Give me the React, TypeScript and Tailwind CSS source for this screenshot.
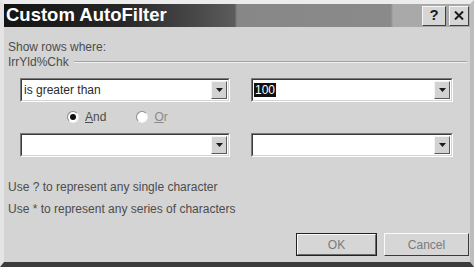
import React from "react";

function Arrow() {
    return (
        <svg width="7" height="4" viewBox="0 0 7 4">
            <path d="M0 0h7L3.5 4z" fill="#1a1a1a" />
        </svg>
    );
}

function Combo({ width, children }: { width: string; children?: React.ReactNode }) {
    return (
        <div className={`${width} h-[24px] border border-t-[#7a7a7a] border-l-[#7a7a7a] border-b-white border-r-white`}>
            <div className="h-full flex items-stretch bg-white border border-t-[#3a3a3a] border-l-[#3a3a3a] border-b-[#d4d4d4] border-r-[#d4d4d4]">
                <div className="flex-1 flex items-center pl-[2px] text-[12px] text-[#2a2a2a]">{children}</div>
                <div className="w-[16px] m-[1px] bg-[#d2d2d2] border border-t-[#f4f4f4] border-l-[#f4f4f4] border-b-[#5a5a5a] border-r-[#5a5a5a] flex items-center justify-center">
                    <Arrow />
                </div>
            </div>
        </div>
    );
}

function Radio({ checked }: { checked?: boolean }) {
    return (
        <div className="w-[12px] h-[12px] rounded-full bg-white border border-t-[#8a8a8a] border-l-[#8a8a8a] border-b-[#eeeeee] border-r-[#eeeeee] flex items-center justify-center">
            {checked && <div className="w-[6px] h-[6px] rounded-full bg-[#111]" />}
        </div>
    );
}

export default function App() {
    return (
        <div
            className="w-[474px] h-[267px] flex flex-col bg-[#d4d4d4] border-t-4 border-l-4 border-r-4 border-b-[5px] border-t-[#ececec] border-l-[#e4e4e4] border-r-[#bdbdbd] border-b-[#3c3c3c]"
            style={{ fontFamily: '"Liberation Sans", Arial, sans-serif' }}
        >
            {/* Title bar */}
            <div className="h-[23px] flex items-center bg-[linear-gradient(to_right,#141414_0%,#262626_25%,#4a4a4a_42%,#5c5c5c_49.5%,#878787_50%,#8a8a8a_83%,#a9a9a9_83.5%,#a9a9a9_100%)] pl-[2px] pr-[1px]">
                <span className="text-white font-bold text-[18.5px] leading-none tracking-[0px]">Custom AutoFilter</span>
                <div className="flex-1" />
                <div className="flex gap-[3px]">
                    <div className="w-[24px] h-[20px] bg-[#d6d6d6] border border-t-[#f6f6f6] border-l-[#f6f6f6] border-b-[#404040] border-r-[#404040] flex items-center justify-center text-[15px] font-bold text-[#1a1a1a]">?</div>
                    <div className="w-[20px] h-[20px] bg-[#d6d6d6] border border-t-[#f6f6f6] border-l-[#f6f6f6] border-b-[#404040] border-r-[#404040] flex items-center justify-center">
                        <svg width="10" height="9" viewBox="0 0 10 9">
                            <path d="M1 0.5L9 8.5M9 0.5L1 8.5" stroke="#1a1a1a" strokeWidth="2" />
                        </svg>
                    </div>
                </div>
            </div>

            {/* Body */}
            <div className="flex-1 flex flex-col text-[12px] text-[#4c4c4c]">
                <div className="mt-[13px] pl-[4px] h-[14px] leading-[14px]">Show rows where:</div>
                <div className="mt-[1px] pl-[4px] h-[14px] leading-[14px] flex items-center">
                    <span>IrrYld%Chk</span>
                    <div className="flex-1 ml-[5px] mr-[3px] border-t border-b border-t-[#a4a4a4] border-b-[#f0f0f0]" />
                </div>

                <div className="mt-[9px] pl-[16px] flex gap-[21px]">
                    <Combo width="w-[210px]">is greater than</Combo>
                    <Combo width="w-[202px]">
                        <span className="bg-[#111] text-white px-[1px] leading-[14px] -ml-[1px]">100</span>
                    </Combo>
                </div>

                <div className="mt-[7px] h-[16px] pl-[63px] flex items-center">
                    <Radio checked />
                    <span className="ml-[6px]">
                        <span className="underline">A</span>nd
                    </span>
                    <div className="ml-[30px]">
                        <Radio />
                    </div>
                    <span className="ml-[6px] text-[#8a8a8a]">
                        <span className="underline">O</span>r
                    </span>
                </div>

                <div className="mt-[8px] pl-[16px] flex gap-[21px]">
                    <Combo width="w-[210px]" />
                    <Combo width="w-[202px]" />
                </div>

                <div className="mt-[23px] pl-[4px] h-[14px] leading-[14px]">Use ? to represent any single character</div>
                <div className="mt-[8px] pl-[4px] h-[14px] leading-[14px]">Use * to represent any series of characters</div>

                <div className="mt-[17px] flex justify-end gap-[7px] pr-[1px]">
                    <div className="w-[81px] h-[23px] border border-[#222]">
                        <div className="h-full bg-[#d6d6d6] border border-t-[#fafafa] border-l-[#fafafa] border-b-[#6a6a6a] border-r-[#6a6a6a] flex items-center justify-center text-[#7a7a7a]">
                            OK
                        </div>
                    </div>
                    <div className="w-[85px] h-[23px] bg-[#d6d6d6] border border-t-[#fafafa] border-l-[#fafafa] border-b-[#3a3a3a] border-r-[#3a3a3a] flex items-center justify-center text-[#7a7a7a]">
                        Cancel
                    </div>
                </div>
            </div>
        </div>
    );
}
